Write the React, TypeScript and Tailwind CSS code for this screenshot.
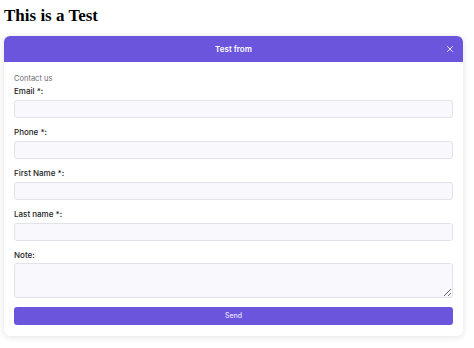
import { X } from "lucide-react";

const fields = ["Email *:", "Phone *:", "First Name *:", "Last name *:"];

export default function App() {
  return (
    <div className="min-h-screen bg-white font-['Inter',sans-serif]">
      <h1 className="px-[4px] pt-[5px] font-['Liberation_Serif',serif] text-[17px] leading-[22px] font-bold text-black">
        This is a Test
      </h1>

      <div className="mx-[4px] mt-[9px] w-[459px] overflow-hidden rounded-[6px] bg-white shadow-[0_1px_6px_rgba(0,0,0,0.12)]">
        <div className="relative flex h-[26px] items-center justify-center bg-[#6b55dd]">
          <span className="text-[8px] font-semibold text-white">Test from</span>
          <button className="absolute right-[8px] top-[8px] text-white">
            <X size={10} strokeWidth={2} />
          </button>
        </div>

        <form className="flex flex-col px-[10px] pb-[11px] pt-[11px]">
          <p className="text-[7.5px] leading-[12px] text-[#6b6b72]">Contact us</p>

          {fields.map((label, i) => (
            <div key={label} className={i === 0 ? "mb-[7px] flex flex-col" : "mt-[1px] mb-[7px] flex flex-col"}>
              <label className="text-[8px] leading-[12px] font-medium text-[#1c1c22]">
                {label}
              </label>
              <input className="mt-[3px] h-[18px] w-full rounded-[3px] border border-[#e3e2e8] bg-[#f9f8fc]" />
            </div>
          ))}

          <div className="mt-[1px] flex flex-col">
            <label className="text-[8px] leading-[12px] font-medium text-[#1c1c22]">
              Note:
            </label>
            <textarea className="mt-[2px] h-[35px] w-full rounded-[3px] border border-[#e3e2e8] bg-[#f9f8fc]" />
          </div>

          <button
            type="button"
            className="mt-[9px] h-[18px] w-full rounded-[3px] bg-[#6b55dd] text-[7px] font-medium text-[#e6e1ff]"
          >
            Send
          </button>
        </form>
      </div>
    </div>
  );
}
